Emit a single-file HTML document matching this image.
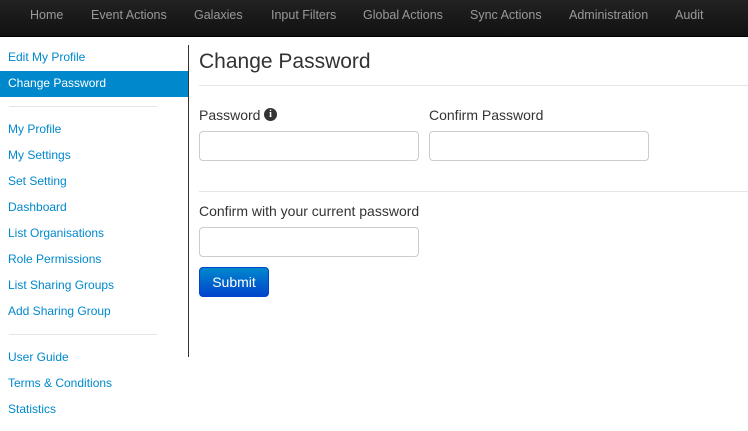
<!DOCTYPE html>
<html><head><style>
body{margin:0;width:748px;height:431px;overflow:hidden;background:#fff;font-family:"Liberation Sans",sans-serif;position:relative}
.nav{position:absolute;left:0;top:0;width:748px;height:36px;background:linear-gradient(#222,#111);border-bottom:1px solid #000}
.nav span{position:absolute;top:8px;color:#999;font-size:12.5px}
.s a{position:absolute;left:8px;font-size:12px;color:#0088cc;text-decoration:none;line-height:14px}
.act{position:absolute;left:0;top:71px;width:188px;height:26px;background:#0088cc}
.shr{position:absolute;left:9px;width:148px;height:1px;background:#e5e5e5}
.vl{position:absolute;left:188px;top:45px;width:1px;height:312px;background:#333}
.t{position:absolute;color:#333;font-size:14px}
.in{position:absolute;height:28px;border:1px solid #ccc;border-radius:4px;background:#fff}
.hr{position:absolute;left:199px;width:549px;height:1px;background:#e5e5e5}
</style></head><body>
<div class="nav">
<span style="left:30px">Home</span><span style="left:91px">Event Actions</span><span style="left:194px">Galaxies</span><span style="left:271px">Input Filters</span><span style="left:363px">Global Actions</span><span style="left:470px">Sync Actions</span><span style="left:569px">Administration</span><span style="left:675px">Audit</span>
</div>
<div class="s">
<div class="act"></div>
<a style="top:50px">Edit My Profile</a>
<a style="top:76px;color:#fff">Change Password</a>
<div class="shr" style="top:106px"></div>
<a style="top:122px">My Profile</a>
<a style="top:148px">My Settings</a>
<a style="top:174px">Set Setting</a>
<a style="top:200px">Dashboard</a>
<a style="top:226px">List Organisations</a>
<a style="top:252px">Role Permissions</a>
<a style="top:278px">List Sharing Groups</a>
<a style="top:304px">Add Sharing Group</a>
<div class="shr" style="top:334px"></div>
<a style="top:350px">User Guide</a>
<a style="top:376px">Terms &amp; Conditions</a>
<a style="top:402px">Statistics</a>
</div>
<div class="vl"></div>
<div class="t" style="left:199px;top:50px;font-size:21px">Change Password</div>
<div class="hr" style="top:85px"></div>
<div class="t" style="left:199px;top:107px">Password</div>
<div style="position:absolute;left:264px;top:108px;width:13px;height:13px;border-radius:50%;background:#333;color:#fff;font-size:10px;font-weight:bold;text-align:center;line-height:13px;font-family:'Liberation Serif',serif">i</div>
<div class="t" style="left:429px;top:107px">Confirm Password</div>
<div class="in" style="left:199px;top:131px;width:218px"></div>
<div class="in" style="left:429px;top:131px;width:218px"></div>
<div class="hr" style="top:191px"></div>
<div class="t" style="left:199px;top:203px">Confirm with your current password</div>
<div class="in" style="left:199px;top:227px;width:218px"></div>
<div style="position:absolute;left:199px;top:267px;width:68px;height:28px;border:1px solid #04c;border-radius:4px;background:linear-gradient(#08c,#04c);color:#fff;font-size:14px;text-align:center;line-height:28px">Submit</div>
</body></html>
